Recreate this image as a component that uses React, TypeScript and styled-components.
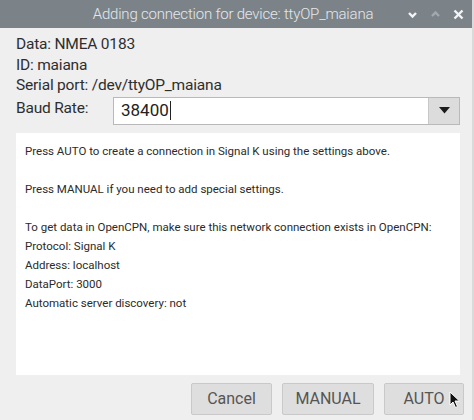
import React from 'react'
import styled, { createGlobalStyle } from 'styled-components'

const GlobalStyle = createGlobalStyle`
  html, body {
    margin: 0;
    padding: 0;
    background: #efefef;
  }
  body {
    font-family: Roboto, "Liberation Sans", sans-serif;
  }
`

const Window = styled.div`
  width: 474px;
  height: 420px;
  display: flex;
  flex-direction: column;
  background: #efefef;
  box-sizing: border-box;
  border-right: 2px solid #dadada;
  overflow: hidden;
`

const TitleBar = styled.div`
  height: 28px;
  flex: none;
  background: #7b8389;
  display: grid;
  grid-template-columns: 1fr auto 1fr;
  align-items: center;
`

const Title = styled.div`
  grid-column: 2;
  color: #e4e8eb;
  font-size: 15px;
  font-weight: 300;
  white-space: nowrap;
  letter-spacing: -0.2px;
  margin-left: -6px;
`

const Controls = styled.div`
  grid-column: 3;
  justify-self: end;
  display: flex;
  align-items: center;
  gap: 10px;
  padding-right: 7px;
`

const CtrlIcon = styled.svg<{ $dim?: boolean }>`
  width: 13px;
  height: 13px;
  display: block;
  stroke: ${p => (p.$dim ? '#a3a9ad' : '#f2f4f5')};
  stroke-width: 2.4;
  fill: none;
`

const Body = styled.div`
  flex: 1;
  display: flex;
  flex-direction: column;
  padding: 6px 8px 0 16px;
`

const InfoLine = styled.div`
  font-size: 15.5px;
  line-height: 20.5px;
  color: #2e2e2e;
  letter-spacing: -0.2px;
`

const BaudRow = styled.div`
  display: flex;
  align-items: center;
  margin-top: 1px;
  height: 28px;
`

const BaudLabel = styled(InfoLine)`
  width: 97px;
  flex: none;
  margin-top: -4px;
`

const Combo = styled.div`
  display: flex;
  width: 347px;
  height: 28px;
  border: 1px solid #b9b9b9;
  box-sizing: border-box;
  background: #fff;
`

const ComboText = styled.div`
  flex: 1;
  padding-left: 7px;
  font-size: 17px;
  line-height: 27px;
  color: #222;
  display: flex;
  align-items: center;
`

const Caret = styled.span`
  display: inline-block;
  width: 1px;
  height: 19px;
  background: #222;
  margin-left: 1px;
`

const DropButton = styled.div`
  width: 30px;
  flex: none;
  background: #dcdcdc;
  border-left: 1px solid #c8c8c8;
  display: flex;
  align-items: center;
  justify-content: center;
`

const Panel = styled.div`
  margin-top: 8px;
  width: 444px;
  height: 242px;
  background: #fff;
  box-sizing: border-box;
  padding: 9px 9px;
  font-size: 11.5px;
  line-height: 19px;
  color: #2b2b2b;
`

const PanelLine = styled.div`
  min-height: 19px;
  white-space: nowrap;
`

const ButtonRow = styled.div`
  display: flex;
  justify-content: flex-end;
  gap: 10px;
  margin-top: 8px;
`

const Button = styled.div<{ $w: number }>`
  position: relative;
  width: ${p => p.$w}px;
  height: 32px;
  box-sizing: border-box;
  border: 1px solid #c9c9c9;
  background: #dedede;
  color: #555;
  font-size: 16px;
  display: flex;
  align-items: center;
  justify-content: center;
  border-radius: 2px;
`

const Cursor = styled.svg`
  position: absolute;
  left: 64px;
  top: 7px;
  width: 12px;
  height: 18px;
`

const panelLines = [
  'Press AUTO to create a connection in Signal K using the settings above.',
  '',
  'Press MANUAL if you need to add special settings.',
  '',
  'To get data in OpenCPN, make sure this network connection exists in OpenCPN:',
  'Protocol: Signal K',
  'Address: localhost',
  'DataPort: 3000',
  'Automatic server discovery: not',
]

export default function App() {
  return (
    <Window>
      <GlobalStyle />
      <TitleBar>
        <Title>Adding connection for device: ttyOP_maiana</Title>
        <Controls>
          <CtrlIcon viewBox="0 0 13 13">
            <polyline points="3,5 6.5,8.5 10,5" />
          </CtrlIcon>
          <CtrlIcon viewBox="0 0 13 13" $dim>
            <polyline points="3,8 6.5,4.5 10,8" />
          </CtrlIcon>
          <CtrlIcon viewBox="0 0 13 13">
            <line x1="2.5" y1="2.5" x2="10.5" y2="10.5" />
            <line x1="10.5" y1="2.5" x2="2.5" y2="10.5" />
          </CtrlIcon>
        </Controls>
      </TitleBar>
      <Body>
        <InfoLine>Data: NMEA 0183</InfoLine>
        <InfoLine>ID: maiana</InfoLine>
        <InfoLine>Serial port: /dev/ttyOP_maiana</InfoLine>
        <BaudRow>
          <BaudLabel>Baud Rate:</BaudLabel>
          <Combo>
            <ComboText>
              38400
              <Caret />
            </ComboText>
            <DropButton>
              <svg width="11" height="7" viewBox="0 0 11 7">
                <polygon points="0,0 11,0 5.5,6.5" fill="#1a1a1a" />
              </svg>
            </DropButton>
          </Combo>
        </BaudRow>
        <Panel>
          {panelLines.map((l, i) => (
            <PanelLine key={i}>{l}</PanelLine>
          ))}
        </Panel>
        <ButtonRow>
          <Button $w={81}>Cancel</Button>
          <Button $w={92}>MANUAL</Button>
          <Button $w={80}>
            AUTO
            <Cursor viewBox="0 0 12 18">
              <path
                d="M1 1 L1 14 L4 11 L6.5 16.5 L8.5 15.5 L6 10 L10.5 10 Z"
                fill="#111"
                stroke="#fff"
                strokeWidth="1"
              />
            </Cursor>
          </Button>
        </ButtonRow>
      </Body>
    </Window>
  )
}
